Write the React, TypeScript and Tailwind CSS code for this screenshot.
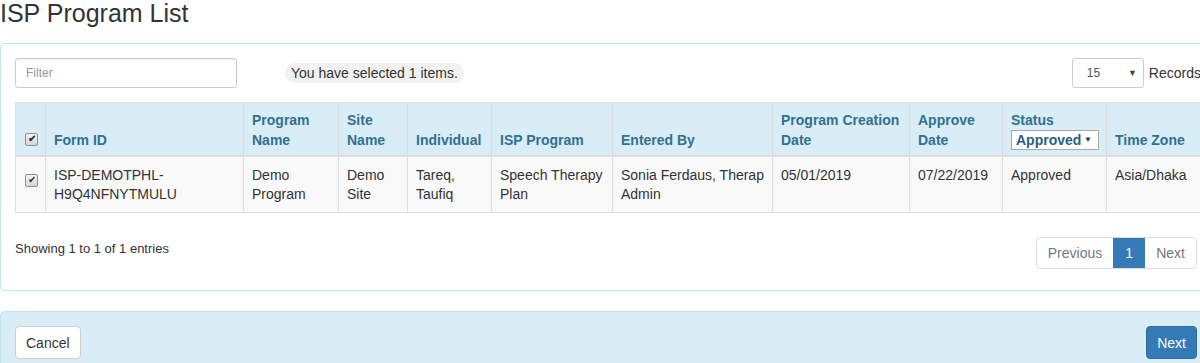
import React from "react";

const cols = [30, 198, 95, 69, 84, 121, 160, 137, 93, 104, 99];

function Check() {
  return (
    <span className="inline-flex h-[13px] w-[13px] items-center justify-center rounded-[2px] border border-[#8f8f8f] bg-gradient-to-b from-[#f4f4f4] to-[#d6d6d6] text-[10px] leading-none text-[#333]">
      ✔
    </span>
  );
}

export default function App() {
  const th = "border-b-2 border-l border-[#ddd] px-2 pt-[7px] pb-[5px] text-left align-bottom font-bold leading-[20px] text-[#31708f]";
  const td = "border-l border-[#ddd] px-2 pt-[9px] pb-[8px] align-top leading-[19px]";

  return (
    <div className="h-[363px] w-[1200px] overflow-hidden bg-white font-['Liberation_Sans',Arial,sans-serif] text-[14px] leading-[20px] text-[#333]">
      <h3 className="text-[25px] font-normal leading-[26px] text-[#333]">ISP Program List</h3>

      <div className="mt-[17px] w-[1212px] rounded-[4px] border border-[#bce8f1] px-[14px] pb-[21px] pt-[14px]">
        <div className="flex items-center">
          <input
            placeholder="Filter"
            className="h-[30px] w-[222px] rounded-[3px] border border-[#ccc] px-[10px] text-[12px] text-[#555] placeholder:text-[#999] shadow-[inset_0_1px_1px_rgba(0,0,0,0.075)]"
          />
          <span className="ml-[48px] rounded-full bg-[#f1f1f1] px-[6px] leading-[20px]">You have selected 1 items.</span>
          <div className="ml-auto mr-[-4px] flex items-center">
            <div className="flex h-[30px] w-[72px] items-center justify-between rounded-[3px] border border-[#ccc] pl-[14px] pr-[6px] text-[12px] text-[#555]">
              <span>15</span>
              <span className="text-[9px] text-[#444]">▼</span>
            </div>
            <span className="ml-[5px]">Records</span>
          </div>
        </div>

        <table className="mt-[14px] w-[1190px] table-fixed border-collapse border border-[#ddd]">
          <colgroup>
            {cols.map((w, i) => (
              <col key={i} style={{ width: w }} />
            ))}
          </colgroup>
          <thead className="bg-[#d9edf7]">
            <tr className="border-t border-[#ddd]">
              <th className={th + " pb-[8px] pl-[9px]"}>
                <Check />
              </th>
              <th className={th}>Form ID</th>
              <th className={th}>Program<br />Name</th>
              <th className={th}>Site<br />Name</th>
              <th className={th}>Individual</th>
              <th className={th}>ISP Program</th>
              <th className={th}>Entered By</th>
              <th className={th}>Program Creation<br />Date</th>
              <th className={th}>Approve<br />Date</th>
              <th className={th}>
                <div>Status</div>
                <div className="flex h-[20px] w-[88px] items-center justify-between border border-[#aaa] bg-white pl-[4px] pr-[6px] text-[#2b5f80]">
                  <span>Approved</span>
                  <span className="text-[8px] text-[#333]">▼</span>
                </div>
              </th>
              <th className={th}>Time Zone</th>
            </tr>
          </thead>
          <tbody>
            <tr className="border-b border-[#ddd] bg-[#f9f9f9]">
              <td className={td + " pl-[9px] pt-[12px]"}>
                <Check />
              </td>
              <td className={td}>ISP-DEMOTPHL-<br />H9Q4NFNYTMULU</td>
              <td className={td}>Demo<br />Program</td>
              <td className={td}>Demo<br />Site</td>
              <td className={td}>Tareq,<br />Taufiq</td>
              <td className={td}>Speech Therapy<br />Plan</td>
              <td className={td}>Sonia Ferdaus, Therap<br />Admin</td>
              <td className={td}>05/01/2019</td>
              <td className={td}>07/22/2019</td>
              <td className={td}>Approved</td>
              <td className={td}>Asia/Dhaka</td>
            </tr>
          </tbody>
        </table>

        <div className="mt-[24px] flex items-center justify-between">
          <span className="mt-[-8px] text-[13px]">Showing 1 to 1 of 1 entries</span>
          <div className="flex h-[32px] overflow-hidden rounded-[4px] border border-[#ddd]">
            <span className="flex items-center px-[11px] text-[#777]">Previous</span>
            <span className="flex w-[32px] items-center justify-center bg-[#337ab7] text-white">1</span>
            <span className="flex items-center px-[11px] text-[#777]">Next</span>
          </div>
        </div>
      </div>

      <div className="mt-[20px] flex w-[1212px] items-center justify-between rounded-[4px] border border-[#bce8f1] bg-[#d9edf7] px-[14px] py-[14px]">
        <button className="h-[33px] rounded-[4px] border border-[#ccc] bg-white px-[10px] text-[#333]">Cancel</button>
        <button className="h-[33px] rounded-[4px] border border-[#2e6da4] bg-[#337ab7] px-[10px] text-white">Next</button>
      </div>
    </div>
  );
}
